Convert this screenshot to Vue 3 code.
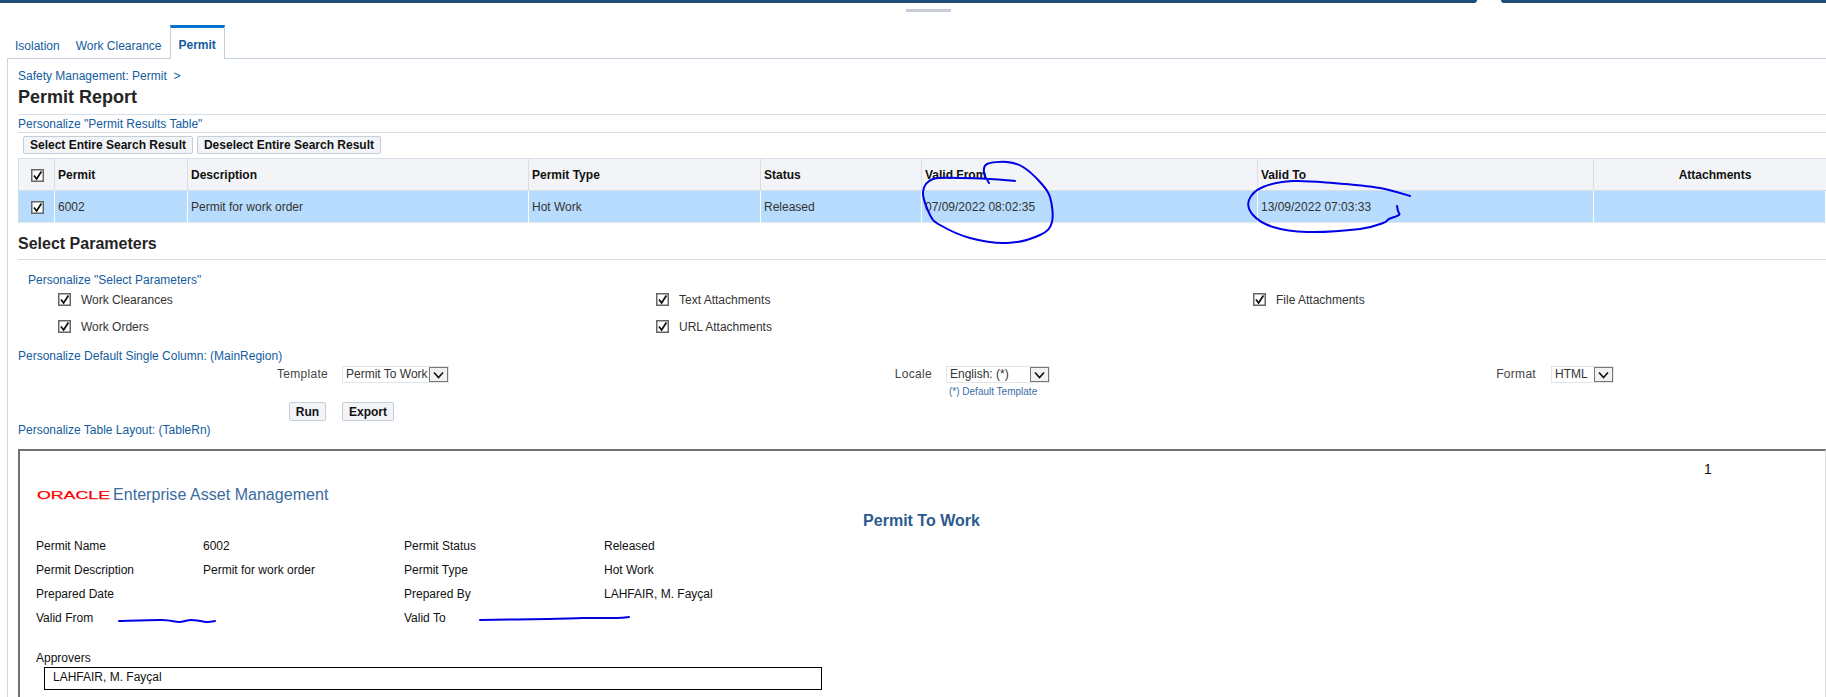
<template>
  <div class="page">
    <div class="top-bar">
      <div class="top-seg left"></div>
      <div class="top-seg right"></div>
    </div>
    <div class="handle"></div>

    <div class="tabs">
      <a class="tab">Isolation</a>
      <a class="tab">Work Clearance</a>
      <a class="tab active">Permit</a>
    </div>

    <div class="panel">
      <div class="crumb">Safety Management: Permit&nbsp; &gt;</div>
      <h1 class="title">Permit Report</h1>
      <div class="link-line ruled">Personalize "Permit Results Table"</div>

      <div class="toolbar">
        <button class="btn wide-a">Select Entire Search Result</button>
        <button class="btn wide-b">Deselect Entire Search Result</button>
      </div>

      <table class="results">
        <colgroup>
          <col v-for="w in colWidths" :key="w.id" :style="{ width: w.px + 'px' }">
        </colgroup>
        <thead>
          <tr>
            <th class="sel">
              <svg class="check" viewBox="0 0 13 13"><rect x=".75" y=".75" width="11.5" height="11.5" fill="#fff" stroke="#666" stroke-width="1.5"/><path d="M3 6.5 5.6 10 10.4 2.6" fill="none" stroke="#111" stroke-width="1.8"/></svg>
            </th>
            <th>Permit</th>
            <th>Description</th>
            <th>Permit Type</th>
            <th>Status</th>
            <th>Valid From</th>
            <th>Valid To</th>
            <th class="center">Attachments</th>
          </tr>
        </thead>
        <tbody>
          <tr>
            <td class="sel">
              <svg class="check" viewBox="0 0 13 13"><rect x=".75" y=".75" width="11.5" height="11.5" fill="#fff" stroke="#666" stroke-width="1.5"/><path d="M3 6.5 5.6 10 10.4 2.6" fill="none" stroke="#111" stroke-width="1.8"/></svg>
            </td>
            <td>6002</td>
            <td>Permit for work order</td>
            <td>Hot Work</td>
            <td>Released</td>
            <td>07/09/2022 08:02:35</td>
            <td>13/09/2022 07:03:33</td>
            <td></td>
          </tr>
        </tbody>
      </table>

      <h2 class="section">Select Parameters</h2>

      <div class="link-line params-link">Personalize "Select Parameters"</div>
      <div class="params">
        <label v-for="p in params" :key="p" class="param">
          <svg class="check" viewBox="0 0 13 13"><rect x=".75" y=".75" width="11.5" height="11.5" fill="#fff" stroke="#666" stroke-width="1.5"/><path d="M3 6.5 5.6 10 10.4 2.6" fill="none" stroke="#111" stroke-width="1.8"/></svg>
          <span>{{ p }}</span>
        </label>
      </div>

      <div class="link-line region-link">Personalize Default Single Column: (MainRegion)</div>
      <div class="form-row">
        <div v-for="f in fields" :key="f.label" class="field">
          <span class="field-label">{{ f.label }}</span>
          <div class="field-control">
            <div class="select" :style="{ width: f.width + 'px' }">
              <span class="select-text">{{ f.value }}</span>
              <span class="select-arrow">
                <svg viewBox="0 0 11 8" width="11" height="8"><path d="M1 1.5 5.5 6.5 10 1.5" fill="none" stroke="#111" stroke-width="1.6"/></svg>
              </span>
            </div>
            <div v-if="f.note" class="note">{{ f.note }}</div>
          </div>
        </div>
      </div>

      <div class="actions">
        <button class="btn small">Run</button>
        <button class="btn small">Export</button>
      </div>

      <div class="link-line layout-link">Personalize Table Layout: (TableRn)</div>

      <div class="report">
        <div class="page-no">1</div>
        <div class="brand">
          <svg class="oracle" viewBox="0 0 74 10" width="74" height="10">
            <text x="0" y="9" font-size="11.5" textLength="73" lengthAdjust="spacingAndGlyphs" fill="#f80000" stroke="#f80000" stroke-width=".25">ORACLE</text>
          </svg>
          <span class="brand-name">Enterprise Asset Management</span>
        </div>
        <div class="report-title">Permit To Work</div>
        <div class="report-grid">
          <span v-for="(c, i) in reportCells" :key="i">{{ c }}</span>
        </div>
        <div class="approvers-label">Approvers</div>
        <div class="approvers-box">LAHFAIR, M. Fayçal</div>
      </div>
    </div>

    <!-- pen marks drawn over the screenshot -->
    <svg class="ink" width="1826" height="697" viewBox="0 0 1826 697">
      <path v-for="(d, i) in inkPaths" :key="i" :d="d" fill="none" stroke="#0000e6" stroke-width="2" stroke-linecap="round" stroke-linejoin="round"/>
    </svg>
  </div>
</template>

<script setup>
const colWidths = [
  { id: 'sel', px: 37 },
  { id: 'permit', px: 133 },
  { id: 'desc', px: 341 },
  { id: 'type', px: 232 },
  { id: 'status', px: 161 },
  { id: 'from', px: 336 },
  { id: 'to', px: 336 },
  { id: 'att', px: 232 }
]

const params = [
  'Work Clearances',
  'Text Attachments',
  'File Attachments',
  'Work Orders',
  'URL Attachments'
]

const fields = [
  { label: 'Template', value: 'Permit To Work', width: 107 },
  { label: 'Locale', value: 'English: (*)', width: 104, note: '(*) Default Template' },
  { label: 'Format', value: 'HTML', width: 63 }
]

const reportCells = [
  'Permit Name', '6002', 'Permit Status', 'Released',
  'Permit Description', 'Permit for work order', 'Permit Type', 'Hot Work',
  'Prepared Date', '', 'Prepared By', 'LAHFAIR, M. Fayçal',
  'Valid From', '', 'Valid To', ''
]

const strokes = [
  [[1015, 181], [990, 179], [960, 178], [933, 179], [923, 192], [930, 215], [940, 225], [970, 238], [1007, 243], [1040, 235], [1052, 222], [1050, 197], [1040, 182], [1023, 167], [1007, 162], [987, 164], [984, 173], [989, 183]],
  [[1410, 196], [1380, 188], [1333, 183], [1293, 181], [1263, 187], [1249, 200], [1253, 215], [1273, 227], [1307, 232], [1360, 229], [1383, 223], [1389, 219], [1399, 215], [1398, 211], [1397, 206]],
  [[119, 621], [162, 620], [179, 622], [191, 620], [207, 622], [215, 621]],
  [[480, 620], [548, 619], [583, 618], [617, 618], [629, 617]]
]

// catmull-rom line so the curve goes through every point
const smooth = (pts) => {
  let d = `M${pts[0][0]} ${pts[0][1]}`
  for (let i = 0; i < pts.length - 1; i++) {
    const p0 = pts[i - 1] || pts[i]
    const p1 = pts[i]
    const p2 = pts[i + 1]
    const p3 = pts[i + 2] || p2
    const c1x = p1[0] + (p2[0] - p0[0]) / 6
    const c1y = p1[1] + (p2[1] - p0[1]) / 6
    const c2x = p2[0] - (p3[0] - p1[0]) / 6
    const c2y = p2[1] - (p3[1] - p1[1]) / 6
    d += ` C${c1x} ${c1y} ${c2x} ${c2y} ${p2[0]} ${p2[1]}`
  }
  return d
}

const inkPaths = strokes.map(smooth)
</script>

<style>
html, body {
  margin: 0;
  background: #fff;
  overflow: hidden;
}
</style>

<style scoped>
.page {
  position: relative;
  width: 1826px;
  height: 697px;
  overflow: hidden;
  font-family: "Liberation Sans", Arial, sans-serif;
  font-size: 12px;
  color: #333;
  background: #fff;
}

.top-bar {
  display: flex;
  gap: 24px;
  height: 3px;
}

.top-seg {
  background: #1f4e79;
  height: 3px;
}

.top-seg.left {
  width: 1477px;
  border-bottom-right-radius: 3px;
}

.top-seg.right {
  flex: 1;
  border-bottom-left-radius: 3px;
}

.handle {
  width: 45px;
  height: 3px;
  margin: 6px 0 0 906px;
  background: #c8ccd8;
}

.tabs {
  display: flex;
  height: 33px;
  margin-top: 13px;
  padding-left: 7px;
}

.tab {
  padding: 0 8px;
  line-height: 42px;
  color: #145c9e;
}

.tab.active {
  position: relative;
  z-index: 1;
  height: 34px;
  box-sizing: border-box;
  border: 1px solid #c4d0dc;
  border-top: 3px solid #0572ce;
  border-bottom: 0;
  background: #fff;
  line-height: 34px;
  font-weight: 700;
}

.panel {
  margin-left: 7px;
  padding: 9px 0 0 10px;
  height: 700px;
  box-sizing: border-box;
  border-top: 1px solid #c4d0dc;
  border-left: 1px solid #c9d5e0;
}

.crumb {
  line-height: 16px;
  color: #145c9e;
}

.title {
  margin: 1px 0 0;
  padding-bottom: 5px;
  border-bottom: 1px solid #d6dfe6;
  font-size: 18px;
  line-height: 24px;
  font-weight: 700;
  color: #252525;
}

.link-line {
  color: #145c9e;
  line-height: 17px;
}

.link-line.ruled {
  padding-top: 1px;
  line-height: 16px;
  border-bottom: 1px solid #d6dfe6;
}

.toolbar {
  display: flex;
  gap: 4px;
  height: 25px;
  padding: 3px 0 0 5px;
  box-sizing: border-box;
}

.btn {
  height: 18px;
  padding: 0;
  border: 1px solid #c4ced7;
  border-radius: 2px;
  background: #f2f4f7;
  font-family: inherit;
  font-size: 12px;
  font-weight: 700;
  line-height: 16px;
  color: #111;
}

.btn.wide-a {
  width: 170px;
}

.btn.wide-b {
  width: 184px;
}

.results {
  width: 1808px;
  table-layout: fixed;
  border-collapse: separate;
  border-spacing: 0;
}

.results th,
.results td {
  box-sizing: border-box;
  padding: 0 0 0 3px;
  text-align: left;
  font-size: 12px;
}

.results th {
  height: 33px;
  border-top: 1px solid #d6dfe6;
  border-bottom: 1px solid #d6dfe6;
  border-right: 1px solid #d6dfe6;
  background: #f2f4f7;
  font-weight: 700;
  color: #111;
}

.results td {
  height: 32px;
  border-bottom: 1px solid #e3e8ee;
  border-right: 1px solid #fff;
  background: #b8dcfd;
  color: #333;
}

.results .sel {
  padding: 0 0 0 1px;
  border-left: 1px solid #d6dfe6;
  text-align: center;
}

.results th.center {
  padding-left: 10px;
  text-align: center;
  border-right: 0;
}

.check {
  display: inline-block;
  flex: none;
  width: 13px;
  height: 13px;
  vertical-align: middle;
}

.section {
  margin: 11px 0 0;
  padding-bottom: 5px;
  border-bottom: 1px solid #d6dfe6;
  font-size: 16px;
  line-height: 20px;
  font-weight: 700;
  color: #252525;
}

.params-link {
  margin-top: 12px;
  padding-left: 10px;
}

.params {
  display: grid;
  grid-template-columns: 598px 597px 1fr;
  grid-auto-rows: 27px;
  padding-left: 40px;
}

.param {
  display: flex;
  align-items: center;
  gap: 10px;
  height: 27px;
  margin-top: -3px;
}

.region-link {
  margin-top: 5px;
}

.form-row {
  display: grid;
  grid-template-columns: repeat(3, 604px);
  height: 37px;
}

.field {
  display: flex;
  gap: 14px;
}

.field-label {
  width: 310px;
  padding-top: 1px;
  line-height: 17px;
  text-align: right;
  letter-spacing: .3px;
  color: #444;
}

.field:nth-child(3) .field-label {
  margin-right: 1px;
}

.select {
  display: flex;
  justify-content: space-between;
  align-items: center;
  box-sizing: border-box;
  height: 17px;
  margin-top: 1px;
  padding-left: 3px;
  border: 1px solid #dfe6ec;
  background: #fff;
  line-height: 15px;
  color: #333;
}

.select-text {
  white-space: nowrap;
  overflow: hidden;
}

.select-arrow {
  display: flex;
  align-items: center;
  justify-content: center;
  flex: none;
  box-sizing: border-box;
  width: 19px;
  height: 15px;
  border: 1px solid #777;
  background: #f2f2f2;
}

.note {
  margin: 3px 0 0 3px;
  font-size: 10px;
  line-height: 12px;
  color: #3c6ea8;
}

.actions {
  display: flex;
  gap: 16px;
  padding-left: 271px;
}

.btn.small {
  height: 19px;
}

.btn.small:first-child {
  width: 37px;
}

.btn.small:last-child {
  width: 52px;
}

.layout-link {
  margin-top: 1px;
}

.report {
  margin-top: 10px;
  padding: 10px 0 0 16px;
  height: 300px;
  box-sizing: border-box;
  border-top: 2px solid #707070;
  border-left: 2px solid #707070;
  border-right: 1px solid #dcdcdc;
  color: #111;
}

.page-no {
  padding-left: 1668px;
  font-size: 14px;
  line-height: 16px;
}

.brand {
  display: flex;
  align-items: center;
  gap: 2px;
  height: 16px;
  margin: 10px 0 0 1px;
}

.oracle {
  flex: none;
  font-family: "Liberation Sans", Arial, sans-serif;
}

.brand-name {
  font-size: 16px;
  line-height: 16px;
  letter-spacing: .04px;
  color: #3a6a9e;
}

.report-title {
  margin: 8px 0 0 -18px;
  font-size: 16px;
  line-height: 20px;
  font-weight: 700;
  text-align: center;
  color: #2c5a8f;
}

.report-grid {
  display: grid;
  grid-template-columns: 167px 201px 200px 1fr;
  grid-auto-rows: 24px;
  margin-top: 3px;
  line-height: 24px;
}

.approvers-label {
  margin-top: 20px;
  line-height: 16px;
}

.approvers-box {
  box-sizing: border-box;
  width: 778px;
  height: 23px;
  margin: 1px 0 0 8px;
  padding: 1px 0 0 8px;
  border: 1px solid #000;
  line-height: 16px;
}

.ink {
  position: absolute;
  top: 0;
  left: 0;
  pointer-events: none;
}
</style>
